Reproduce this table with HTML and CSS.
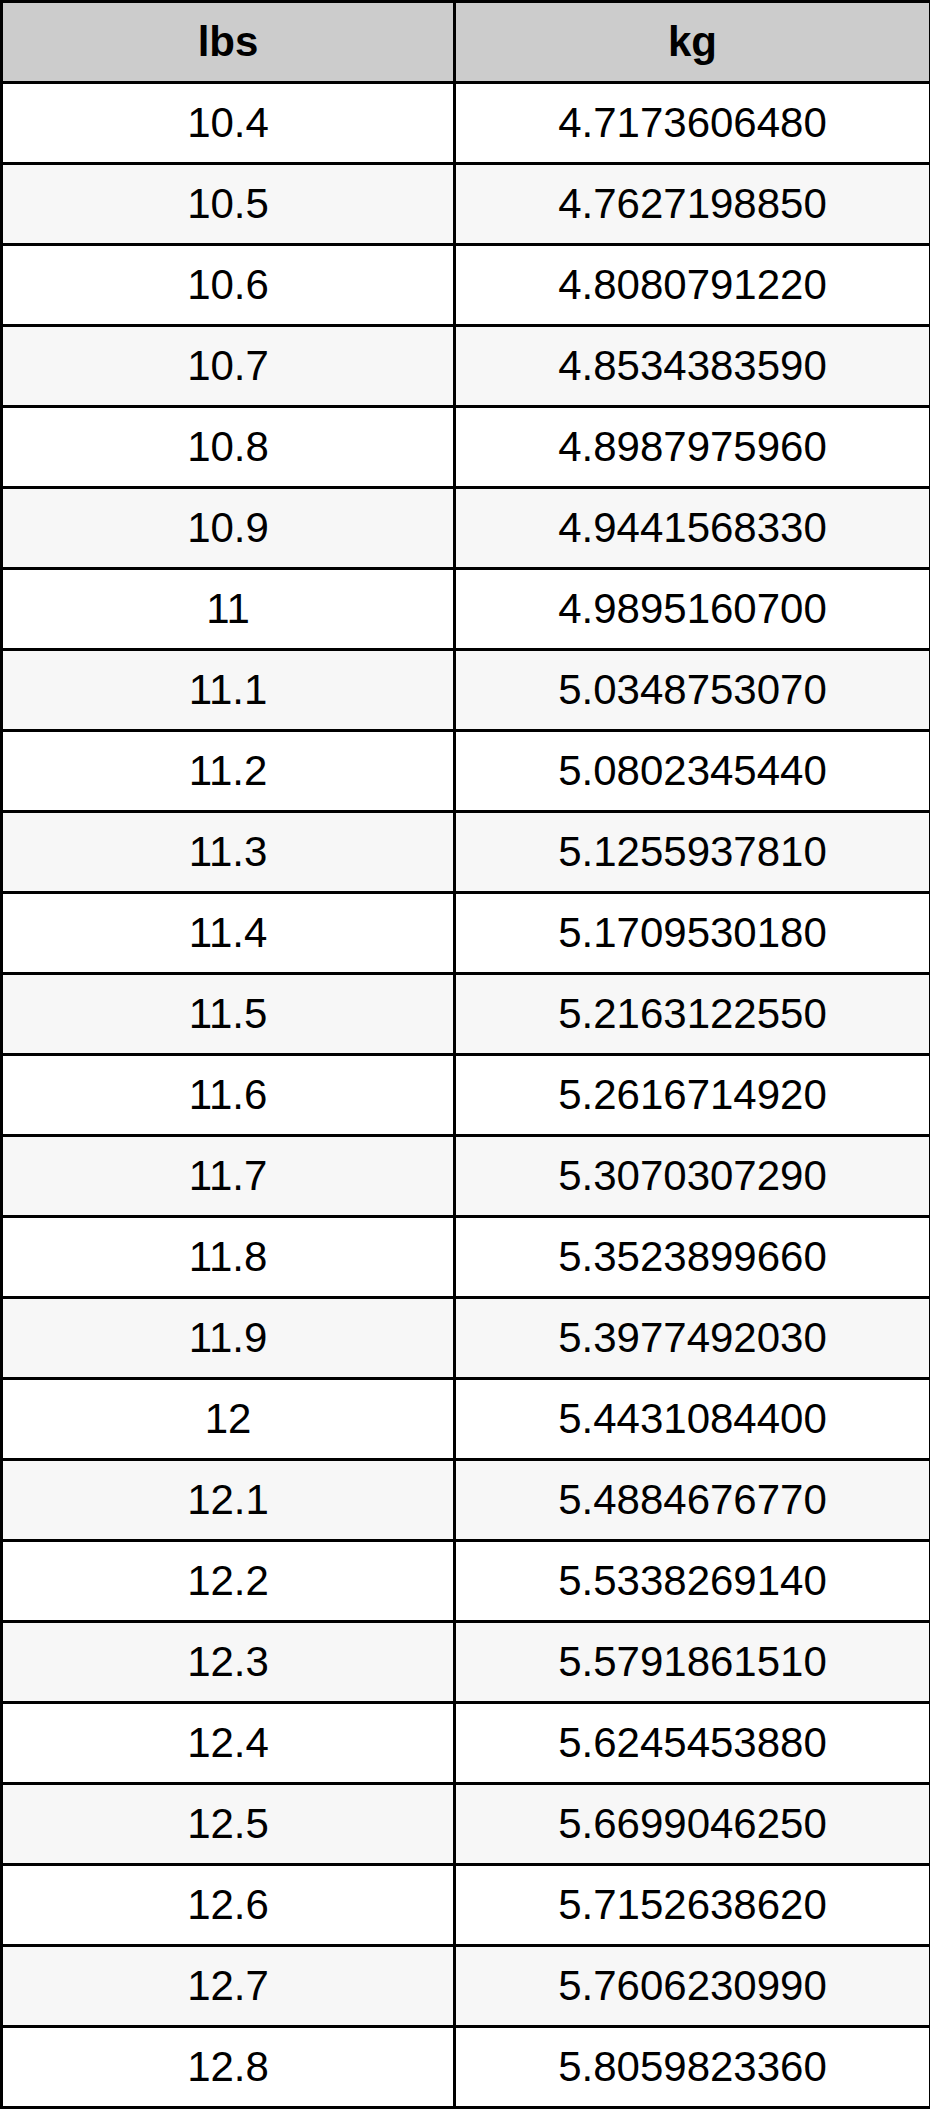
FILE: index.html
```html
<!DOCTYPE html>
<html>
<head>
<meta charset="utf-8">
<link rel="stylesheet" href="styles.css">
</head>
<body>
<table class="conv">
<colgroup><col class="c1"><col class="c2"></colgroup>
<thead><tr><th>lbs</th><th>kg</th></tr></thead>
<tbody>
<tr><td>10.4</td><td>4.7173606480</td></tr>
<tr><td>10.5</td><td>4.7627198850</td></tr>
<tr><td>10.6</td><td>4.8080791220</td></tr>
<tr><td>10.7</td><td>4.8534383590</td></tr>
<tr><td>10.8</td><td>4.8987975960</td></tr>
<tr><td>10.9</td><td>4.9441568330</td></tr>
<tr><td>11</td><td>4.9895160700</td></tr>
<tr><td>11.1</td><td>5.0348753070</td></tr>
<tr><td>11.2</td><td>5.0802345440</td></tr>
<tr><td>11.3</td><td>5.1255937810</td></tr>
<tr><td>11.4</td><td>5.1709530180</td></tr>
<tr><td>11.5</td><td>5.2163122550</td></tr>
<tr><td>11.6</td><td>5.2616714920</td></tr>
<tr><td>11.7</td><td>5.3070307290</td></tr>
<tr><td>11.8</td><td>5.3523899660</td></tr>
<tr><td>11.9</td><td>5.3977492030</td></tr>
<tr><td>12</td><td>5.4431084400</td></tr>
<tr><td>12.1</td><td>5.4884676770</td></tr>
<tr><td>12.2</td><td>5.5338269140</td></tr>
<tr><td>12.3</td><td>5.5791861510</td></tr>
<tr><td>12.4</td><td>5.6245453880</td></tr>
<tr><td>12.5</td><td>5.6699046250</td></tr>
<tr><td>12.6</td><td>5.7152638620</td></tr>
<tr><td>12.7</td><td>5.7606230990</td></tr>
<tr><td>12.8</td><td>5.8059823360</td></tr>
</tbody>
</table>
</body>
</html>
```
FILE: styles.css
```css
html, body {
  margin: 0;
  padding: 0;
  background: #ffffff;
}

.conv {
  width: 929px;
  border-collapse: collapse;
  table-layout: fixed;
  font-family: "Liberation Sans", Arial, sans-serif;
  font-size: 42px;
  color: #000000;
}

.c1 { width: 453px; }
.c2 { width: 476px; }

.conv th,
.conv td {
  border: 3px solid #000000;
  height: 78px;
  padding: 0;
  text-align: center;
  vertical-align: middle;
  line-height: 1;
}

.conv th {
  background: #cccccc;
  font-weight: bold;
}

.conv tbody tr:nth-child(even) td {
  background: #f7f7f7;
}
```
